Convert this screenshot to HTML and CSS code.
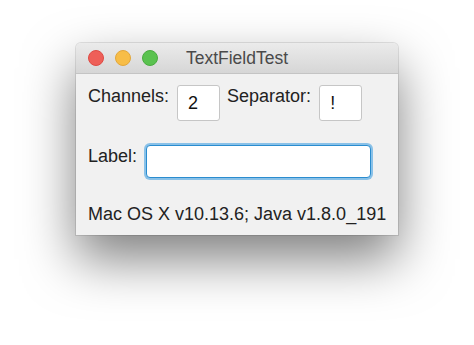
FILE: index.html
```html
<!DOCTYPE html>
<html>
<head>
<meta charset="utf-8">
<link rel="stylesheet" href="styles.css">
</head>
<body>
<div class="window">
  <div class="titlebar">
    <div class="lights">
      <span class="light red"></span>
      <span class="light yellow"></span>
      <span class="light green"></span>
    </div>
    <div class="title">TextFieldTest</div>
  </div>
  <div class="content">
    <div class="row row1">
      <span class="label">Channels:</span>
      <div class="field small"><span class="val">2</span></div>
      <span class="label sep">Separator:</span>
      <div class="field small"><span class="val">!</span></div>
    </div>
    <div class="row row2">
      <span class="label">Label:</span>
      <div class="field wide"></div>
    </div>
    <div class="info">Mac OS X v10.13.6; Java v1.8.0_191</div>
  </div>
</div>
</body>
</html>
```
FILE: styles.css
```css
html, body {
  margin: 0;
  padding: 0;
  background: #ffffff;
  width: 474px;
  height: 345px;
  overflow: hidden;
}
body {
  font-family: "Liberation Sans", Arial, sans-serif;
  color: #222222;
}
.window {
  margin: 43px 0 0 76px;
  width: 322px;
  height: 192px;
  border-radius: 5px 5px 0 0;
  background: #f1f1f1;
  box-shadow: 0 0 0 1px rgba(0,0,0,0.10), 0 24px 52px rgba(0,0,0,0.5);
  display: flex;
  flex-direction: column;
}
.titlebar {
  position: relative;
  height: 30px;
  border-radius: 5px 5px 0 0;
  background: linear-gradient(#ebebeb, #d6d6d6);
  border-bottom: 1px solid #c4c4c4;
  display: flex;
  align-items: center;
  justify-content: center;
}
.lights {
  position: absolute;
  left: 12px;
  top: 7px;
  display: flex;
  gap: 11px;
}
.light {
  width: 16px;
  height: 16px;
  border-radius: 50%;
  box-sizing: border-box;
}
.red { background: #ee5f58; border: 1px solid #de4b44; }
.yellow { background: #f7bd47; border: 1px solid #e3a73a; }
.green { background: #5ac24f; border: 1px solid #4aab40; }
.title {
  font-size: 17.5px;
  color: #4a4a4a;
  padding-top: 1px;
}
.content {
  padding: 11px 0 0 12px;
  display: flex;
  flex-direction: column;
  font-size: 18px;
}
.row {
  display: flex;
  align-items: flex-start;
}
.label {
  line-height: 21px;
}
.row1 .label { margin-top: 1px; }
.field {
  box-sizing: border-box;
  background: #ffffff;
  border: 1px solid #c6c6c6;
  border-radius: 3px;
}
.small {
  width: 43px;
  height: 36px;
  margin-left: 8px;
  display: flex;
  align-items: center;
  padding-left: 10px;
  padding-top: 1px;
}
.sep { margin-left: 7px; }
.val { font-size: 18px; line-height: 21px; color: #111; }
.row2 {
  margin-top: 23.5px;
}
.row2 .label { margin-top: 1px; }
.wide {
  width: 225px;
  height: 33px;
  margin-left: 9px;
  border: 1px solid #2a8ccf;
  box-shadow: 0 0 0 2px rgba(92, 172, 228, 0.7);
  border-radius: 4px;
}
.info {
  margin-top: 26px;
  line-height: 21px;
}
```
